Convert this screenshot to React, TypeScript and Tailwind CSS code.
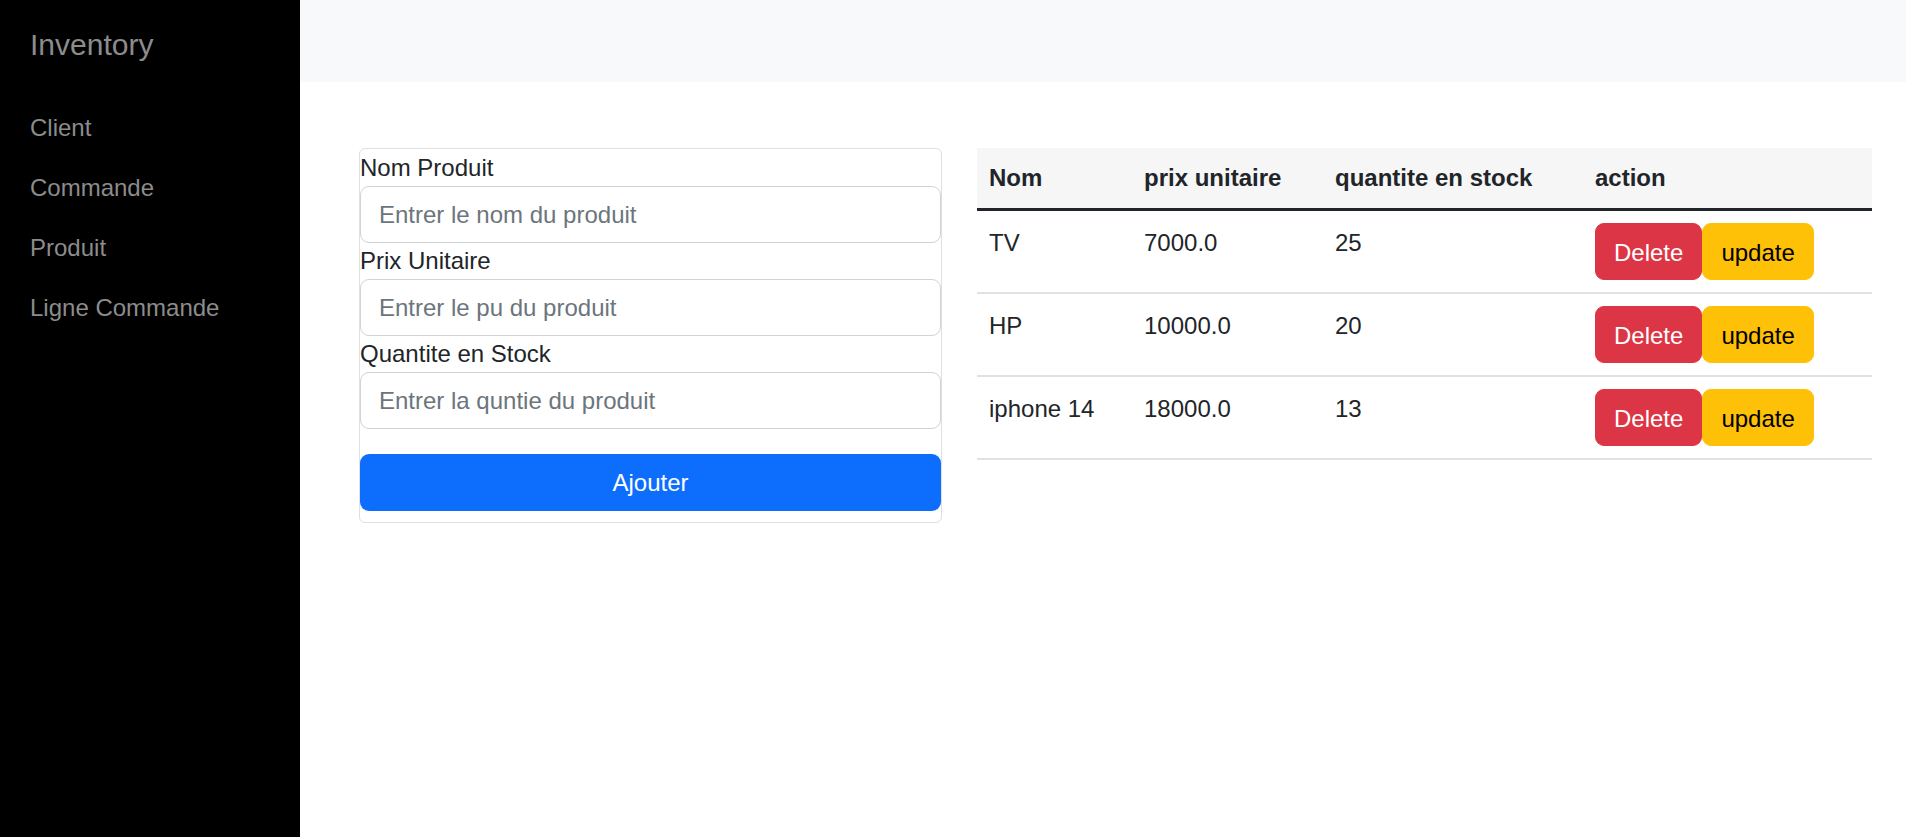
import React from "react";

const rows = [
  { nom: "TV", prix: "7000.0", qte: "25" },
  { nom: "HP", prix: "10000.0", qte: "20" },
  { nom: "iphone 14", prix: "18000.0", qte: "13" },
];

function Field({ label, placeholder }: { label: string; placeholder: string }) {
  return (
    <div className="flex flex-col">
      <label className="text-[24px] leading-[36px] text-[#212529]">{label}</label>
      <input
        type="text"
        placeholder={placeholder}
        className="h-[57px] w-full rounded-[9px] border border-[#ced4da] bg-white px-[18px] text-[24px] leading-[36px] text-[#212529] placeholder:text-[#6c757d] outline-none"
      />
    </div>
  );
}

export default function App() {
  return (
    <div
      className="flex h-screen min-h-[837px] w-full bg-white"
      style={{ fontFamily: '"Liberation Sans", Arial, sans-serif' }}
    >
      <aside className="flex w-[300px] shrink-0 flex-col bg-black px-[30px]">
        <div className="mt-[22px] text-[30px] leading-[45px] text-[#8c8c8c]">Inventory</div>
        <nav className="mt-[31px] flex flex-col">
          {["Client", "Commande", "Produit", "Ligne Commande"].map((l) => (
            <a key={l} className="py-[12px] text-[24px] leading-[36px] text-[#8c8c8c]">
              {l}
            </a>
          ))}
        </nav>
      </aside>
      <main className="flex flex-1 flex-col">
        <div className="h-[82px] w-full bg-[#f8f9fa]" />
        <div className="flex items-start gap-[35px] pl-[59px] pt-[66px]">
          <div className="flex w-[583px] flex-col rounded-[6px] border border-[#dfdfdf] pt-[1px] pb-[11px]">
            <Field label="Nom Produit" placeholder="Entrer le nom du produit" />
            <Field label="Prix Unitaire" placeholder="Entrer le pu du produit" />
            <Field label="Quantite en Stock" placeholder="Entrer la quntie du produit" />
            <button className="mt-[25px] h-[57px] w-full rounded-[9px] bg-[#0d6efd] text-[24px] leading-[36px] text-white">
              Ajouter
            </button>
          </div>
          <table className="w-[895px] table-fixed border-collapse text-[24px] leading-[36px] text-[#212529]">
            <colgroup>
              <col className="w-[155px]" />
              <col className="w-[191px]" />
              <col className="w-[260px]" />
              <col className="w-[289px]" />
            </colgroup>
            <thead>
              <tr className="bg-[#f6f6f6] border-b-[3px] border-[#212529]">
                <th className="px-[12px] py-[12px] text-left font-bold">Nom</th>
                <th className="px-[12px] py-[12px] text-left font-bold">prix unitaire</th>
                <th className="px-[12px] py-[12px] text-left font-bold">quantite en stock</th>
                <th className="px-[12px] py-[12px] text-left font-bold">action</th>
              </tr>
            </thead>
            <tbody>
              {rows.map((r) => (
                <tr key={r.nom} className="border-b-2 border-[#dee2e6]">
                  <td className="px-[12px] pt-[14px] pb-[12px] align-top">{r.nom}</td>
                  <td className="px-[12px] pt-[14px] pb-[12px] align-top">{r.prix}</td>
                  <td className="px-[12px] pt-[14px] pb-[12px] align-top">{r.qte}</td>
                  <td className="px-[12px] pt-[12px] pb-[12px] align-top">
                    <div className="flex">
                      <button className="h-[57px] rounded-[9px] border border-[#dc3545] bg-[#dc3545] px-[18px] pt-[2px] text-[24px] leading-[36px] text-white">
                        Delete
                      </button>
                      <button className="h-[57px] rounded-[9px] border border-[#ffc107] bg-[#ffc107] px-[18px] pt-[2px] text-[24px] leading-[36px] text-black">
                        update
                      </button>
                    </div>
                  </td>
                </tr>
              ))}
            </tbody>
          </table>
        </div>
      </main>
    </div>
  );
}
